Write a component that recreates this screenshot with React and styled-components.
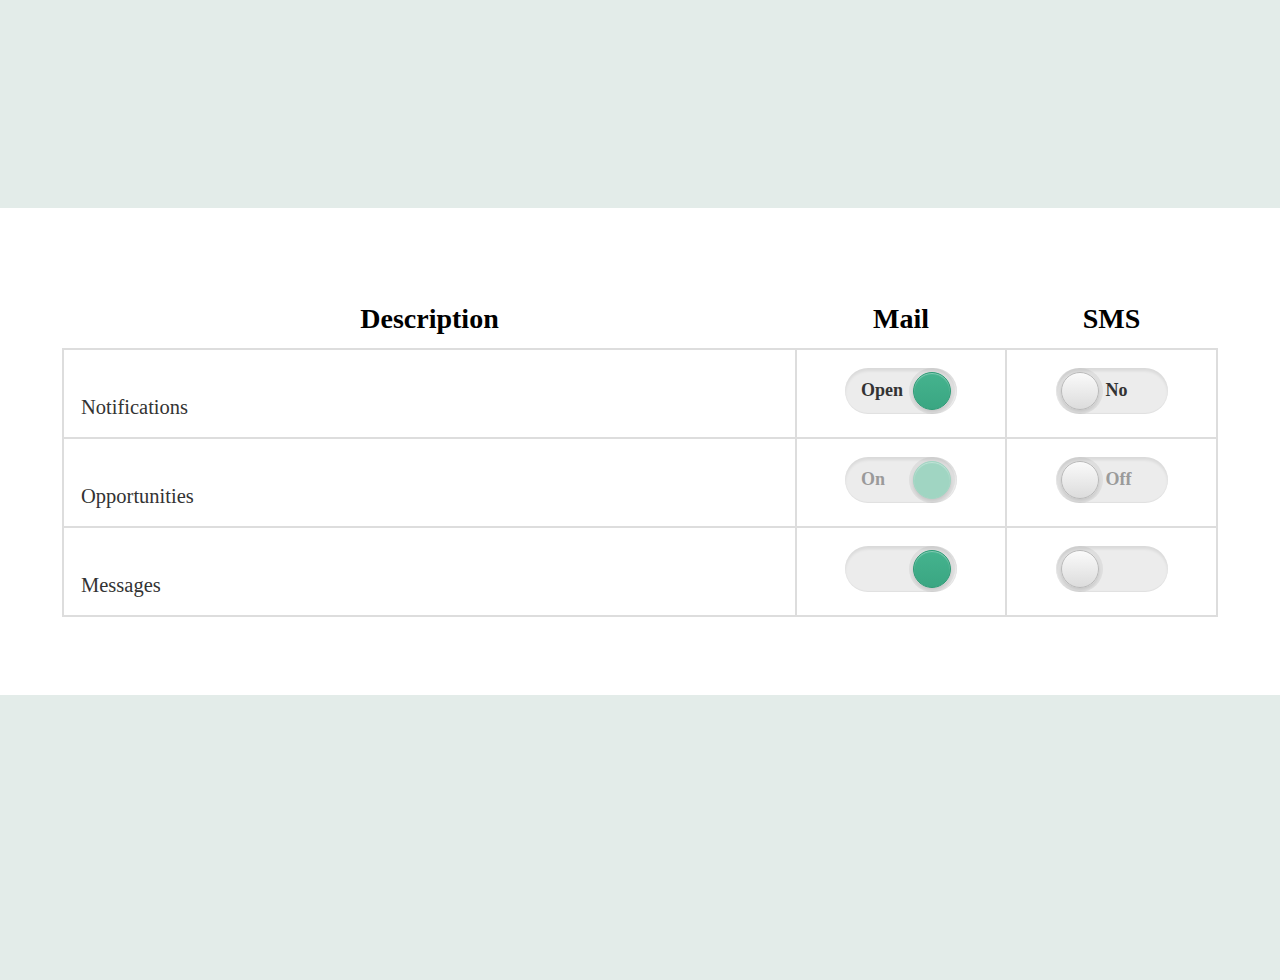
import styled, { createGlobalStyle } from "styled-components";

const GlobalStyle = createGlobalStyle`
  html, body {
    margin: 0;
    padding: 0;
    background: #e3ece9;
    font-family: "Liberation Serif", "Times New Roman", serif;
  }
`;

const Page = styled.div`
  min-height: 980px;
  padding-top: 208px;
  box-sizing: border-box;
`;

const Band = styled.section`
  background: #ffffff;
  height: 487px;
  box-sizing: border-box;
  padding: 94px 62px 0;
`;

const Table = styled.table`
  width: 100%;
  border-collapse: collapse;
`;

const HeadCell = styled.th`
  font-size: 28px;
  font-weight: bold;
  color: #000;
  text-align: center;
  padding: 0 0 12px;
  line-height: 1.2;
  width: ${(p) => p.width || "auto"};
`;

const Row = styled.tr`
  height: 89px;
`;

const DescCell = styled.td`
  border: 2px solid #dddddd;
  vertical-align: bottom;
  padding: 0 18px 17px 17px;
  font-size: 20.5px;
  color: #333;
  line-height: 1.2;
`;

const ToggleCell = styled.td`
  border: 2px solid #dddddd;
  vertical-align: top;
  text-align: center;
  padding: 18px 0 0;
`;

const Track = styled.span`
  display: inline-flex;
  align-items: center;
  flex-direction: ${(p) => (p.on ? "row" : "row-reverse")};
  justify-content: space-between;
  box-sizing: border-box;
  width: 112px;
  height: 46px;
  border-radius: 23px;
  background: #ececec;
  box-shadow: inset 0 3px 3px rgba(0, 0, 0, 0.08), inset 0 -1px 1px rgba(0, 0, 0, 0.05);
  padding: ${(p) => (p.on ? "0 6px 0 16px" : "0 16px 0 5px")};
`;

const Label = styled.span`
  flex: 1;
  text-align: left;
  padding-left: ${(p) => (p.on ? "0" : "7px")};
  font-size: 18px;
  font-weight: bold;
  color: ${(p) => (p.disabled ? "#9a9a9a" : "#333")};
`;

const Knob = styled.span`
  flex: none;
  width: 36px;
  height: 36px;
  border-radius: 50%;
  box-sizing: content-box;
  border: 1px solid ${(p) => (p.on ? (p.disabled ? "#a3d6c4" : "#2f9a76") : "#b9b9b9")};
  background: ${(p) =>
    p.on
      ? p.disabled
        ? "#a0d5c2"
        : "linear-gradient(#45b38e, #3aa682)"
      : "linear-gradient(#fafafa, #dcdcdc)"};
  box-shadow: 0 0 0 4px rgba(0, 0, 0, 0.06), 0 2px 3px rgba(0, 0, 0, 0.1),
    inset 0 1px 1px rgba(255, 255, 255, 0.4);
`;

const Toggle = ({ on, label, disabled }) => (
  <Track on={on ? 1 : 0}>
    <Label on={on ? 1 : 0} disabled={disabled}>
      {label}
    </Label>
    <Knob on={on ? 1 : 0} disabled={disabled} />
  </Track>
);

const rows = [
  { name: "Notifications", mail: { on: true, label: "Open" }, sms: { on: false, label: "No" } },
  { name: "Opportunities", mail: { on: true, label: "On", disabled: true }, sms: { on: false, label: "Off", disabled: true } },
  { name: "Messages", mail: { on: true, label: "" }, sms: { on: false, label: "" } },
];

export default function App() {
  return (
    <>
      <GlobalStyle />
      <Page>
        <Band>
          <Table>
            <thead>
              <tr>
                <HeadCell>Description</HeadCell>
                <HeadCell width="210px">Mail</HeadCell>
                <HeadCell width="211px">SMS</HeadCell>
              </tr>
            </thead>
            <tbody>
              {rows.map((r) => (
                <Row key={r.name}>
                  <DescCell>{r.name}</DescCell>
                  <ToggleCell>
                    <Toggle {...r.mail} />
                  </ToggleCell>
                  <ToggleCell>
                    <Toggle {...r.sms} />
                  </ToggleCell>
                </Row>
              ))}
            </tbody>
          </Table>
        </Band>
      </Page>
    </>
  );
}
